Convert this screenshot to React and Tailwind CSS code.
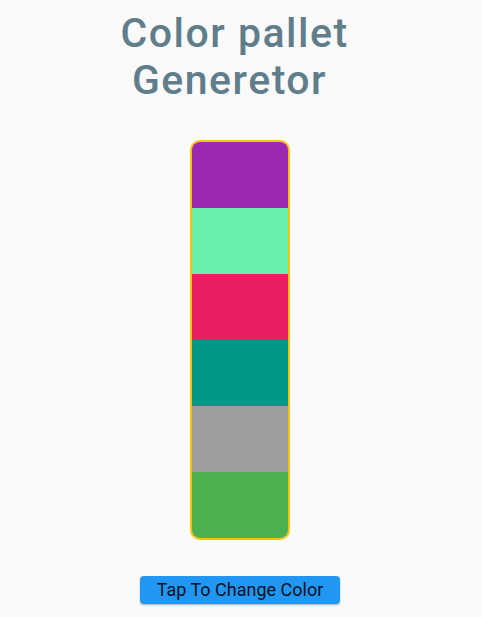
const colors = ['#9C27B0', '#69F0AE', '#E91E63', '#009688', '#9E9E9E', '#4CAF50'];

export default function App() {
  return (
    <div className="w-[482px] h-[617px] bg-[#fafafa] pr-[2px] flex flex-col items-center font-['Roboto',sans-serif]">
      <div className="w-full flex flex-col items-center pr-[16px] pt-[10px] text-[41px] leading-[47px] font-medium text-[#607d8b] tracking-[1.5px]">
        <h1 className="pl-[5px]">Color pallet</h1>
        <h1 className="pr-[5px]">Generetor</h1>
      </div>
      <div className="mt-[36px] w-[100px] h-[400px] border-2 border-[#ffc107] rounded-[10px] overflow-hidden flex flex-col">
        {colors.map((c) => (
          <div key={c} className="flex-1" style={{ backgroundColor: c }} />
        ))}
      </div>
      <button className="mt-[36px] w-[200px] h-[28px] bg-[#2196f3] rounded-[4px] shadow-[0_1px_2px_rgba(0,0,0,0.3)] text-[18px] text-black/90 leading-none">
        Tap To Change Color
      </button>
    </div>
  );
}
